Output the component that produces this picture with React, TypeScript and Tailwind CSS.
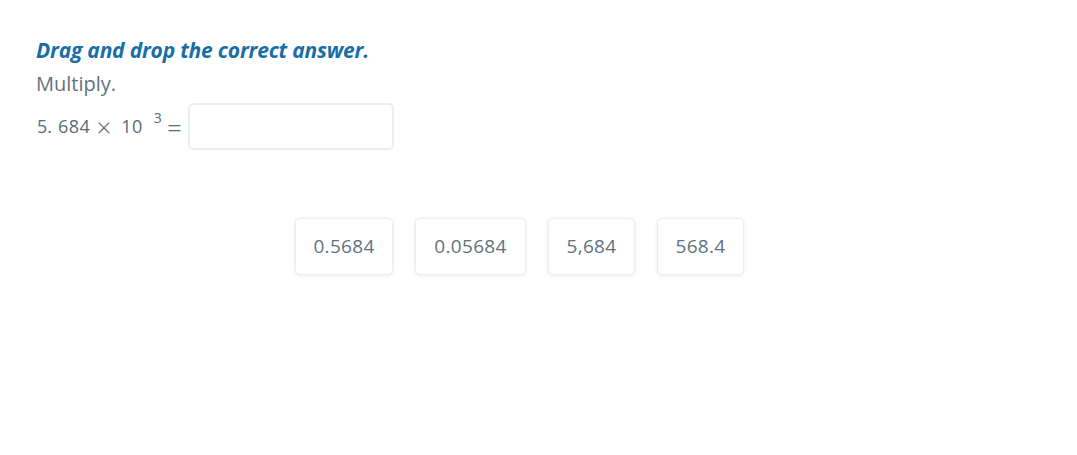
import React from "react";

const choices = [
  { t: "0.5684", w: "w-[98px]" },
  { t: "0.05684", w: "w-[111px]" },
  { t: "5,684", w: "w-[87px]" },
  { t: "568.4", w: "w-[87px]" },
];

export default function App() {
  return (
    <div className="min-h-[455px] w-[1077px] bg-white" style={{ fontFamily: '"Open Sans", "Liberation Sans", sans-serif' }}>
      <div className="w-[1003px] pl-[36px] pt-[35px]">
        <h1 className="text-[21px] font-bold italic leading-[30px] tracking-[-0.2px] text-[#1a6ea8]">
          Drag and drop the correct answer.
        </h1>
        <p className="mt-[5px] text-[20px] leading-[28px] text-[#63737b]">Multiply.</p>
        <div className="mt-[5px] flex items-center text-[18px] text-[#5a6b74]">
          <span className="ml-[1px]">5</span>
          <span>.</span>
          <span className="ml-[6px] tracking-[0.5px]">684</span>
          <span className="ml-[6px] text-[26px] font-light leading-[20px]">×</span>
          <span className="ml-[10px] tracking-[0.5px]">10</span>
          <span className="relative -top-[9px] ml-[11px] text-[14px]">3</span>
          <span className="ml-[5px] mr-[6px] text-[26px] font-light leading-[20px]">=</span>
          <div className="h-[47px] w-[206px] rounded-[5px] border-2 border-[#ebeef0] bg-white" />
        </div>
        <div className="mt-[68px] flex justify-center gap-[22px]">
          {choices.map((c) => (
            <div
              key={c.t}
              className={`flex h-[57px] ${c.w} items-center justify-center rounded-[5px] border border-[#ececec] bg-white text-[19px] tracking-[0.3px] text-[#5f737c] shadow-[0_1px_4px_rgba(0,0,0,0.08)]`}
            >
              {c.t}
            </div>
          ))}
        </div>
      </div>
    </div>
  );
}
